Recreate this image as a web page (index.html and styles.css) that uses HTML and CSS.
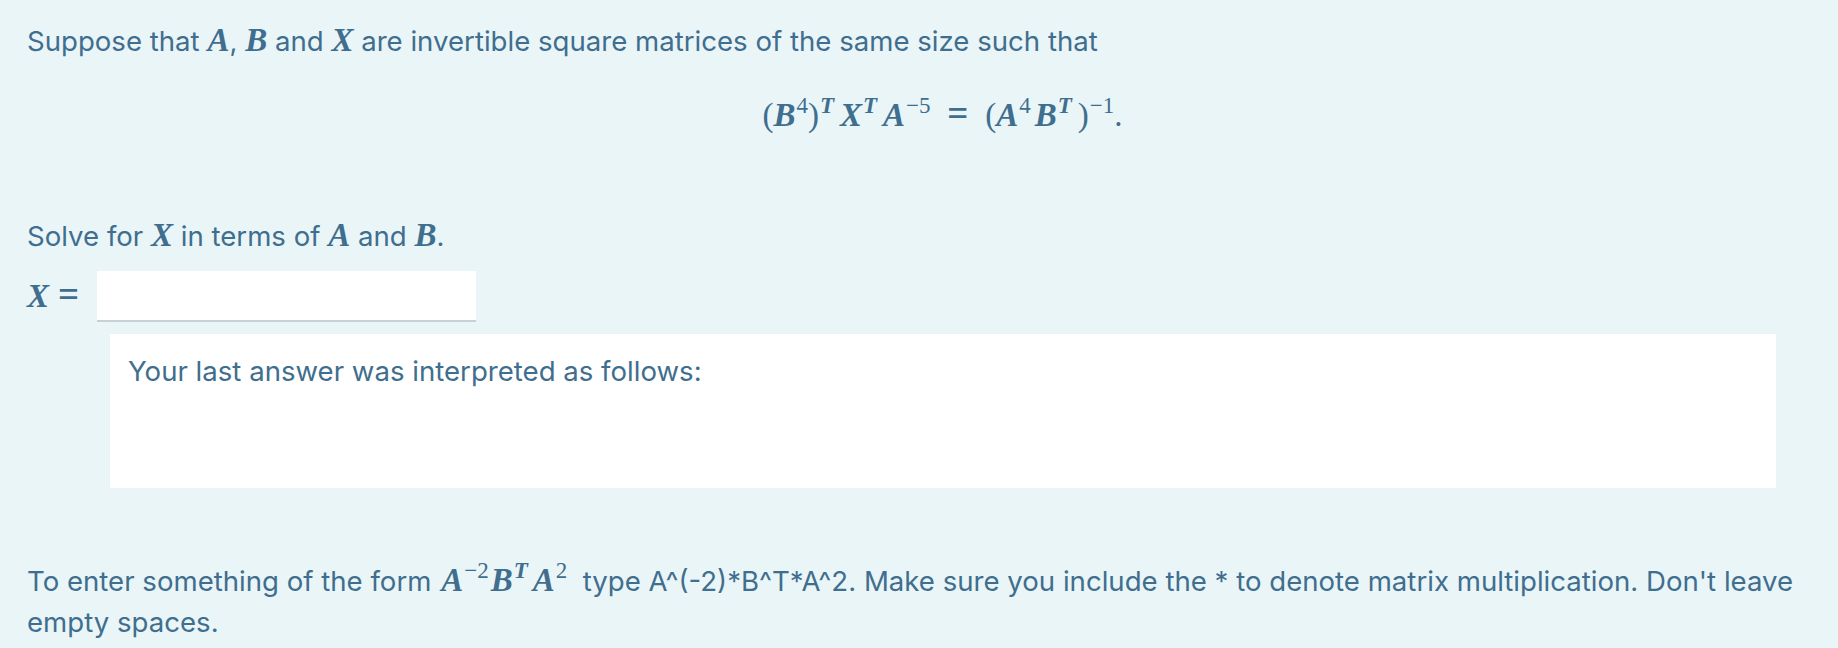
FILE: index.html
```html
<!DOCTYPE html>
<html>

<head>
    <title>Matrix Equation Question</title>
    <link rel="stylesheet" href="styles.css">
</head>

<body>
    <div class="question">
        <p class="text intro">Suppose that <i class="m">A</i>, <i class="m">B</i> and <i class="m">X</i> are invertible square matrices of the same size such that</p>

        <div class="display">
            <span class="mo">(</span><i class="m">B</i><sup class="n">4</sup><span class="mo">)</span><sup class="m">T</sup><i class="m">X</i><sup class="m">T</sup><i class="m">A</i><sup class="n">&minus;5</sup>
            <span class="mo eq">=</span>
            <span class="mo">(</span><i class="m">A</i><sup class="n">4</sup><i class="m sp">B</i><sup class="m">T</sup><span class="mo">)</span><sup class="n">&minus;1</sup><span class="mo">.</span>
        </div>

        <p class="text solve">Solve for <i class="m">X</i> in terms of <i class="m">A</i> and <i class="m">B</i>.</p>

        <div class="answer">
            <span class="label"><i class="m">X</i><span class="mo eq">=</span></span>
            <input class="answer-input" type="text">
        </div>

        <div class="feedback">Your last answer was interpreted as follows:</div>

        <p class="text hint">To enter something of the form <span class="inline-math"><i class="m">A</i><sup class="n">&minus;2</sup><i class="m sp">B</i><sup class="m">T</sup><i class="m sp">A</i><sup class="n">2</sup></span>&nbsp; type A^(-2)*B^T*A^2. Make sure you include the * to denote matrix multiplication. Don't leave empty spaces.</p>
    </div>
</body>
</html>
```

FILE: styles.css
```css
/* Question text on a light blue panel */
body {
    background-color: #eaf5f8;
    font-family: 'Inter', 'Liberation Sans', sans-serif;
    font-size: 27.6px;
    color: #3f6e8e;
    margin: 0;
}

.question {
    padding: 20px 20px 0 27px;
}

.text {
    margin: 0;
    line-height: 40px;
}

/* Math pieces */
.m {
    font-family: 'Liberation Serif', 'Times New Roman', serif;
    font-style: italic;
    font-weight: bold;
    font-size: 33px;
}

.mo {
    font-family: 'Liberation Serif', 'Times New Roman', serif;
    font-size: 33px;
}

.mo.eq {
    font-size: 37px;
    font-weight: bold;
    line-height: 0;
}

sup {
    line-height: 0;
    vertical-align: 0.55em;
}

sup.n {
    font-family: 'Liberation Serif', 'Times New Roman', serif;
    font-size: 23px;
    font-weight: normal;
    margin-left: 1px;
}

sup.m {
    font-size: 23px;
    margin-left: 1px;
    margin-right: 6px;
}

.sp {
    margin-left: 4px;
}

.display {
    margin-top: 34px;
    line-height: 40px;
    text-align: center;
    padding-left: 40px;
}

.display .eq {
    margin: 0 9px;
}

.inline-math {
    margin-left: 2px;
}

.inline-math sup.m {
    margin-right: 3px;
}

.inline-math .sp {
    margin-left: 2px;
}

.solve {
    margin-top: 79px;
}

.answer {
    display: flex;
    align-items: center;
    margin-top: 15px;
}

.label {
    line-height: 40px;
    width: 70px;
}

.label .eq {
    margin-left: 9px;
}

.answer-input {
    width: 379px;
    height: 51px;
    box-sizing: border-box;
    border: none;
    border-bottom: 2px solid #c9cfd2;
    background-color: #ffffff;
    outline: none;
}

.feedback {
    margin: 12px 42px 0 83px;
    height: 154px;
    box-sizing: border-box;
    padding: 17px 18px;
    line-height: 40px;
    background-color: #ffffff;
}

.hint {
    margin-top: 72px;
    line-height: 41px;
}
```
